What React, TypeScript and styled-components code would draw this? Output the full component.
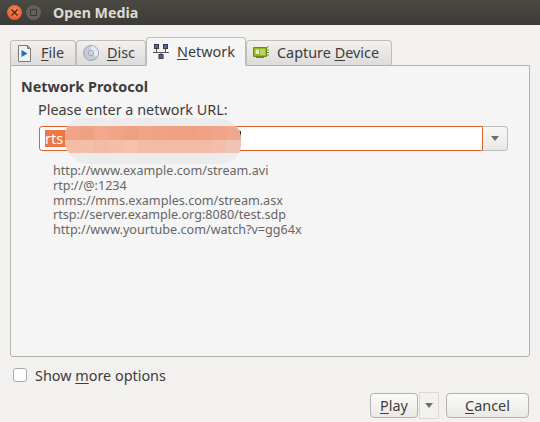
import styled, { createGlobalStyle } from "styled-components";

const topCells = ["#f0a58a", "#f0a184", "#f2a88c", "#f1a488", "#efa083", "#f1a487", "#f0a284", "#f0a083", "#efa083", "#f0a286", "#f0a488", "#eda88e"];
const bottomCells = ["#f3bda8", "#f4bfa9", "#f3bba5", "#f4bea9", "#f5c1ab", "#f4bca6", "#f3bba5", "#f4baa4", "#f3bba6", "#f3baa5", "#f3bfaa", "#f0c4b2"];

const Key = styled.span`
    text-decoration: underline;
    text-underline-offset: 2px;
`

const FileIcon = () => (
    <svg width="16" height="17" viewBox="0 0 16 17">
        <path d="M1.500 0.500h9l3 3v13h-12z" fill="#f2f2f2" stroke="#7c7c7c" />
        <path d="M10.500 0.500v3h3z" fill="#b5b5b5" stroke="#7c7c7c" />
        <path d="M4.500 5l6 3.500-6 3.500z" fill="#2a6cb8" />
    </svg>
)

const DiscIcon = () => (
    <svg width="16" height="16" viewBox="0 0 16 16">
        <circle cx="8" cy="8" r="7.500" fill="#c4ccd9" stroke="#9aa2ae" />
        <path d="M8 1a7 7 0 0 1 5.500 11.300L8 8z" fill="#e8ebf1" />
        <circle cx="8" cy="8" r="2.500" fill="#f0f0f0" stroke="#8f98a5" />
        <circle cx="8" cy="8" r="0.800" fill="#9aa2ae" />
    </svg>
)

const NetworkIcon = () => (
    <svg width="16" height="15" viewBox="0 0 16 15">
        <path d="M3.500 5v3M12.500 5v3M0 8.500h16M8 8.500v2" stroke="#555" fill="none" />
        <rect x="1.500" y="0.500" width="4" height="4" fill="#3d6cc4" stroke="#3a3a3a" />
        <rect x="10.500" y="0.500" width="4" height="4" fill="#3d6cc4" stroke="#3a3a3a" />
        <rect x="6" y="10.500" width="4" height="4" fill="#3d6cc4" stroke="#3a3a3a" />
    </svg>
)

const CaptureIcon = () => (
    <svg width="16" height="14" viewBox="0 0 16 14">
        <path d="M0.500 1.500h13v9h-13z" fill="#93b324" stroke="#6d8a1c" />
        <path d="M14 1.500l1.500-1M14 4h2M14 6.500h2M14 9h2M3 11.500h8" stroke="#6d8a1c" />
        <rect x="2.500" y="3.500" width="3.500" height="4.500" fill="#e4f0ac" />
        <path d="M7 4h5M7 6h5M7 8h5" stroke="#e4f0ac" />
    </svg>
)

export default function App() {
    return (
        <>
            <GlobalStyle />
            <Window>
                <TitleBar>
                    <CloseButton>
                        <svg width="7" height="7" viewBox="0 0 7 7">
                            <path d="M0.500 0.500l6 6M6.500 0.500l-6 6" stroke="#4a2010" strokeWidth="1.200" />
                        </svg>
                    </CloseButton>
                    <MaxButton><MaxSquare /></MaxButton>
                    <Title>Open Media</Title>
                </TitleBar>
                <Content>
                    <TabBar>
                        <Tab $width={66}><FileIcon /><span><Key>F</Key>ile</span></Tab>
                        <Tab $width={70}><DiscIcon /><span><Key>D</Key>isc</span></Tab>
                        <Tab $width={100} $active><NetworkIcon /><span><Key>N</Key>etwork</span></Tab>
                        <Tab $width={146}><CaptureIcon /><span>Capture <Key>D</Key>evice</span></Tab>
                    </TabBar>
                    <Panel>
                        <Heading>Network Protocol</Heading>
                        <Prompt>Please enter a network URL:</Prompt>
                        <Combo>
                            <UrlField>
                                <Selected>rts</Selected>
                                <Caret />
                                <Halo>
                                    <MosaicRow $height={14}>
                                        {topCells.map((c, i) => <MosaicCell key={i} $color={c} />)}
                                    </MosaicRow>
                                    <MosaicRow $height={13}>
                                        {bottomCells.map((c, i) => <MosaicCell key={i} $color={c} />)}
                                    </MosaicRow>
                                </Halo>
                            </UrlField>
                            <ComboArrow><Arrow /></ComboArrow>
                        </Combo>
                        <Examples>
                            <div>http://www.example.com/stream.avi</div>
                            <div>rtp://@:1234</div>
                            <div>mms://mms.examples.com/stream.asx</div>
                            <div>rtsp://server.example.org:8080/test.sdp</div>
                            <div>http://www.yourtube.com/watch?v=gg64x</div>
                        </Examples>
                    </Panel>
                    <OptionsRow>
                        <CheckBox />
                        <span>Show <Key>m</Key>ore options</span>
                    </OptionsRow>
                    <Footer>
                        <Button $width={48}><span><Key>P</Key>lay</span></Button>
                        <SplitArrow><Arrow /></SplitArrow>
                        <Button $width={83} $gap><span><Key>C</Key>ancel</span></Button>
                    </Footer>
                </Content>
            </Window>
        </>
    );
}

const GlobalStyle = createGlobalStyle`
    html, body {
        margin: 0;
        padding: 0;
        background: #f2f1f0;
    }
    body {
        font-family: "Noto Sans", "Open Sans", sans-serif;
        font-size: 14.400px;
        color: #3c3c3c;
    }
`

const Window = styled.div`
    display: flex;
    flex-direction: column;
    height: 422px;
    overflow: hidden;
    width: 540px;
`

const TitleBar = styled.div`
    align-items: center;
    background: linear-gradient(#4b4943, #3c3b37);
    column-gap: 4px;
    display: flex;
    flex: none;
    height: 25px;
    padding-left: 7px;
`

const CloseButton = styled.div`
    align-items: center;
    background: radial-gradient(circle at 50% 40%, #f58a5c, #e2491f);
    border-radius: 50%;
    display: flex;
    height: 15px;
    justify-content: center;
    width: 15px;
`

const MaxButton = styled(CloseButton)`
    background: #63625d;
`

const MaxSquare = styled.div`
    border: 1px solid #36352f;
    border-radius: 1px;
    height: 5px;
    width: 5px;
`

const Title = styled.div`
    color: #dfdbd2;
    font-size: 14.200px;
    font-weight: 700;
    margin-left: 8px;
`

const Content = styled.div`
    display: flex;
    flex: 1;
    flex-direction: column;
    padding: 11px 10px 0;
`

const TabBar = styled.div`
    align-items: flex-end;
    display: flex;
    height: 29px;
    position: relative;
    z-index: 1;
`

const Tab = styled.div<{ $width: number; $active?: boolean }>`
    align-items: center;
    background: ${props => props.$active ? "#f5f5f5" : "linear-gradient(#f2f1f0, #dedcda)"};
    border: 1px solid #c0bdb9;
    border-bottom: ${props => props.$active ? "1px solid #f5f5f5" : "1px solid #b5b2ae"};
    border-radius: 4px 4px 0 0;
    box-sizing: border-box;
    column-gap: 8px;
    display: flex;
    flex: none;
    height: ${props => props.$active ? 29 : 26}px;
    line-height: 20px;
    margin-bottom: -1px;
    padding-left: 6px;
    width: ${props => props.$width}px;
`

const Panel = styled.div`
    background: #f5f5f5;
    border: 1px solid #b5b2ae;
    border-radius: 0 0 3px 3px;
    box-sizing: border-box;
    display: flex;
    flex-direction: column;
    height: 292px;
    padding: 11px 21px 0 10px;
`

const Heading = styled.div`
    font-size: 14.400px;
    font-weight: 700;
    line-height: 20px;
`

const Prompt = styled.div`
    line-height: 20px;
    margin: 3px 0 0 17px;
`

const Combo = styled.div`
    display: flex;
    height: 25px;
    margin: 6px 0 0 18px;
`

const UrlField = styled.div`
    align-items: center;
    background: #fff;
    border: 1px solid #e2622f;
    border-radius: 3px 0 0 3px;
    box-sizing: border-box;
    display: flex;
    flex: 1;
    padding-left: 5px;
    position: relative;
`

const Selected = styled.span`
    background: #ef7645;
    color: #fff;
    line-height: 17px;
    width: 195px;
`

const Caret = styled.div`
    background: #333;
    height: 15px;
    width: 1px;
`

const Halo = styled.div`
    background: #ececec;
    border-radius: 18px 22px 20px 24px;
    box-sizing: border-box;
    display: flex;
    filter: blur(0.6px);
    flex-direction: column;
    height: 46px;
    left: 25px;
    overflow: hidden;
    padding-top: 8px;
    position: absolute;
    top: -9px;
    width: 176px;
`

const MosaicRow = styled.div<{ $height: number }>`
    display: flex;
    flex: none;
    height: ${props => props.$height}px;
`

const MosaicCell = styled.div<{ $color: string }>`
    background: ${props => props.$color};
    flex: 1;
`

const ComboArrow = styled.div`
    align-items: center;
    background: linear-gradient(#f7f7f6, #e9e8e6);
    border: 1px solid #c0bdb9;
    border-left: none;
    border-radius: 0 4px 4px 0;
    box-sizing: border-box;
    display: flex;
    flex: none;
    justify-content: center;
    width: 25px;
`

const Arrow = styled.div`
    border-left: 4px solid transparent;
    border-right: 4px solid transparent;
    border-top: 5px solid #6f6f6f;
    height: 0;
    width: 0;
`

const Examples = styled.div`
    color: #666;
    font-size: 12.600px;
    line-height: 14.750px;
    margin: 13px 0 0 32px;
`

const OptionsRow = styled.div`
    align-items: center;
    column-gap: 8px;
    display: flex;
    height: 20px;
    margin: 8px 0 0 3px;
`

const CheckBox = styled.div`
    background: #fff;
    border: 1px solid #aaa8a5;
    border-radius: 3px;
    box-sizing: border-box;
    height: 14px;
    width: 14px;
`

const Footer = styled.div`
    align-items: center;
    display: flex;
    justify-content: flex-end;
    margin: 7px 1px 0 0;
`

const Button = styled.div<{ $width: number; $gap?: boolean }>`
    align-items: center;
    background: linear-gradient(#fbfbfa, #eae9e7);
    border: 1px solid #b5b2ae;
    border-radius: 4px;
    box-sizing: border-box;
    display: flex;
    height: 25px;
    justify-content: center;
    margin-left: ${props => props.$gap ? 7 : 0}px;
    width: ${props => props.$width}px;
`

const SplitArrow = styled.div`
    align-items: center;
    border: 1px solid #dcdad8;
    box-sizing: border-box;
    display: flex;
    height: 27px;
    justify-content: center;
    margin-left: 1px;
    width: 20px;
`
